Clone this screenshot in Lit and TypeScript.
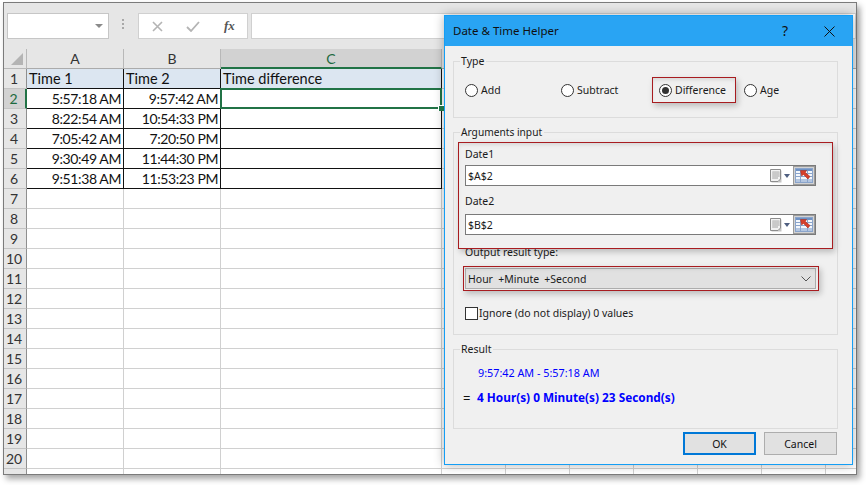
import { LitElement, html, css, svg } from "lit";
import { customElement } from "lit/decorators.js";

const COLS = ["A", "B", "C", "", "", "", "", "", "", ""];
const DATA: [string, string][] = [
  ["5:57:18 AM", "9:57:42 AM"],
  ["8:22:54 AM", "10:54:33 PM"],
  ["7:05:42 AM", "7:20:50 PM"],
  ["9:30:49 AM", "11:44:30 PM"],
  ["9:51:38 AM", "11:53:23 PM"],
];

const calendarIcon = svg`<svg class="cal" width="12" height="14" viewBox="0 0 12 14">
  <path d="M1.500 1.500H11.500V13.500H1.500Z" fill="#c4c4c4" stroke="none"/>
  <path d="M.5 .5H10.500V10L8 12.500H.5Z" fill="#f2f2f2" stroke="#8d8d8d"/>
  <path d="M2.500 3H9M2.500 5H9M2.500 7H9M2.500 9H8M3 2.500V10M5 2.500V10M7 2.500V10M9 2.500V8" stroke="#bcbcbc" stroke-width="1" fill="none"/>
</svg>`;

const rangeIcon = svg`<svg width="18" height="15" viewBox="0 0 18 15">
  <rect x=".5" y=".5" width="17" height="14" fill="#f4f7fb" stroke="#8aa4cb"/>
  <rect x="1" y="1" width="16" height="2" fill="#6f92c4"/>
  <rect x="1" y="11" width="16" height="3" fill="#b4c6e0"/>
  <path d="M1 5.500H17M1 8.500H17M5.500 3V14M12.500 3V14" stroke="#8aa4cb" fill="none"/>
  <path d="M5.500 2.500H11.500L10.300 4.500L15 8.500L13 11L8.500 6.500L6.500 8Z" fill="#d63f2a" stroke="#a52517" stroke-width=".5"/>
</svg>`;

@customElement("app-root")
export class AppRoot extends LitElement {
  static styles = css`
    :host {
      display: block;
      width: 866px;
      height: 485px;
      background: #fff;
      overflow: hidden;
      padding: 2px 0 0 3px;
      box-sizing: border-box;
    }
    .window {
      position: relative;
      width: 854px;
      height: 473px;
      box-sizing: border-box;
      border: 1px solid #7b7b7b;
      background: #e6e6e6;
      box-shadow: 3px 4px 6px rgba(0, 0, 0, 0.35);
      display: flex;
      flex-direction: column;
      overflow: visible;
      font-family: "Lato", "Liberation Sans", sans-serif;
    }
    .toolbar {
      height: 46px;
      flex: none;
      box-sizing: border-box;
      padding: 10px 0 0 3px;
      display: flex;
      align-items: flex-start;
    }
    .namebox {
      width: 102px;
      height: 26px;
      box-sizing: border-box;
      background: #fff;
      border: 1px solid #c6c6c6;
      display: flex;
      align-items: center;
      justify-content: flex-end;
      padding-right: 4px;
    }
    .caret {
      width: 0;
      height: 0;
      border-left: 4px solid transparent;
      border-right: 4px solid transparent;
      border-top: 4px solid #8a8a8a;
      margin-right: 1px;
    }
    .grip {
      width: 2px;
      margin: 6px 14px 0 13px;
      display: flex;
      flex-direction: column;
      gap: 2px;
    }
    .grip i {
      display: block;
      width: 2px;
      height: 2px;
      background: #a8a8a8;
    }
    .fxbox {
      width: 110px;
      height: 26px;
      box-sizing: border-box;
      background: #fff;
      border: 1px solid #d0d0d0;
      display: flex;
      align-items: center;
      margin-right: 3px;
    }
    .fxbox svg {
      display: block;
    }
    .x {
      margin-left: 13px;
    }
    .check {
      margin-left: 23px;
    }
    .fx {
      margin-left: 24px;
      font: italic 700 13px "Liberation Serif", serif;
      color: #555;
    }
    .formula {
      flex: 1;
      height: 26px;
      box-sizing: border-box;
      background: #fff;
      border: 1px solid #d0d0d0;
    }
    .sheetwrap {
      flex: 1;
      overflow: hidden;
      min-height: 0;
    }
    .sheet {
      display: grid;
      grid-template-columns: 23px 97px 97px 221px repeat(7, 64px);
      grid-auto-rows: 20px;
      background: #fff;
      font-size: 14px;
      color: #111;
    }
    .c {
      box-sizing: border-box;
      border-right: 1px solid #d0d0d0;
      border-bottom: 1px solid #d0d0d0;
      min-width: 0;
      white-space: nowrap;
      line-height: 19px;
      padding: 0 2px;
    }
    .corner {
      background: #e6e6e6;
      border-right: 1px solid #b8b8b8;
      border-bottom: 1px solid #b8b8b8;
      display: flex;
      align-items: flex-end;
      justify-content: flex-end;
      padding: 0 3px 3px 0;
    }
    .corner i {
      display: block;
      width: 12px;
      height: 12px;
      background: #b4b4b4;
      clip-path: polygon(100% 0, 100% 100%, 0 100%);
    }
    .ch {
      background: #e6e6e6;
      border-right: 1px solid #b8b8b8;
      border-bottom: 1px solid #ababab;
      text-align: center;
      color: #333;
    }
    .ch.sel {
      background: #d2d2d2;
      color: #1d6a3f;
      border-bottom: 2px solid #217346;
    }
    .rh {
      background: #e6e6e6;
      border-right: 1px solid #8f8f8f;
      border-bottom: 1px solid #c4c4c4;
      text-align: center;
      color: #333;
      padding: 0 2px 0 0;
    }
    .rh.sel {
      background: #d2d2d2;
      color: #1d6a3f;
      border-right: 2px solid #217346;
    }
    .b {
      border-right-color: #111;
      border-bottom-color: #111;
    }
    .head {
      background: #dce6f1;
      font-size: 14.500px;
    }
    .num {
      text-align: right;
      font-size: 14px;
      letter-spacing: -0.4px;
      padding-right: 2px;
    }
    .active {
      position: relative;
    }
    .active::after {
      content: "";
      position: absolute;
      left: -1px;
      top: -1px;
      right: -1px;
      bottom: -1px;
      border: 2px solid #217346;
    }
    .handle {
      position: absolute;
      right: -3px;
      bottom: -3px;
      width: 5px;
      height: 5px;
      background: #217346;
      border: 1px solid #fff;
      border-right: none;
      border-bottom: none;
      z-index: 1;
    }

    .dialog {
      position: absolute;
      left: 440px;
      top: 12px;
      width: 409px;
      height: 450px;
      box-sizing: border-box;
      border: 1px solid #149ef5;
      background: #f0f0f0;
      box-shadow: 0 0 10px rgba(0, 0, 0, 0.3);
      font-family: "Noto Sans", "Liberation Sans", sans-serif;
      font-size: 10.500px;
      line-height: 14px;
      color: #1a1a1a;
      display: flex;
      flex-direction: column;
    }
    .title {
      height: 30px;
      flex: none;
      background: #29a4f3;
      display: flex;
      align-items: center;
      padding: 0 17px 0 8px;
      font-size: 11.500px;
      color: #101010;
    }
    .title span:first-child {
      flex: 1;
    }
    .help {
      font-size: 14px;
      margin-right: 36px;
    }
    .close {
      display: block;
    }
    .body {
      flex: 1;
      padding: 8px 14px 0 8px;
      display: flex;
      flex-direction: column;
      gap: 7px;
    }
    fieldset {
      margin: 0;
      width: 385px;
      box-sizing: border-box;
      border: 1px solid #dcdcdc;
      padding: 0 11px;
      min-width: 0;
      flex: none;
    }
    legend {
      margin-left: -5px;
      padding: 0 2px 0 1px;
      line-height: 14px;
    }
    .type {
      height: 64px;
    }
    .args {
      height: 210px;
    }
    .args legend {
      font-size: 10.200px;
    }
    .result {
      height: 87px;
      padding-left: 9px;
    }
    .result legend {
      margin-left: -3px;
    }
    .radios {
      display: grid;
      grid-template-columns: 96px 98px 85px auto;
      padding-top: 15px;
    }
    .opt {
      display: flex;
      align-items: center;
      gap: 3px;
    }
    .radio {
      width: 13px;
      height: 13px;
      box-sizing: border-box;
      border: 1px solid #333;
      border-radius: 50%;
      background: #fff;
      display: flex;
      align-items: center;
      justify-content: center;
    }
    .radio i {
      display: block;
      width: 7px;
      height: 7px;
      border-radius: 50%;
      background: #333;
    }
    .label {
      padding-top: 8px;
      margin-bottom: 4px;
    }
    .label.second {
      padding-top: 8px;
      margin-bottom: 6px;
    }
    .input {
      width: 351px;
      height: 21px;
      box-sizing: border-box;
      background: #fff;
      border: 1px solid #7a7a7a;
      display: flex;
      align-items: center;
      padding: 0;
    }
    .input .val {
      flex: 1;
      padding-left: 2px;
    }
    .cal {
      display: block;
      flex: none;
      margin-right: 2px;
    }
    .tri {
      flex: none;
      width: 0;
      height: 0;
      border-left: 3.500px solid transparent;
      border-right: 3.500px solid transparent;
      border-top: 4px solid #4f5f80;
      margin-right: 3px;
    }
    .range {
      flex: none;
      width: 22px;
      height: 19px;
      box-sizing: border-box;
      background: #d2d2d2;
      border: 1px solid #9a9a9a;
      display: flex;
      align-items: center;
      justify-content: center;
    }
    .range svg {
      display: block;
    }
    .outlabel {
      padding-top: 10px;
      margin-bottom: 9px;
    }
    .combo {
      width: 351px;
      height: 21px;
      box-sizing: border-box;
      background: #e1e1e1;
      border: 1px solid #adadad;
      display: flex;
      align-items: center;
      justify-content: space-between;
      padding: 0 4px 0 2px;
      word-spacing: 2.500px;
    }
    .combo svg {
      display: block;
    }
    .ignore {
      display: flex;
      align-items: center;
      gap: 1px;
      margin-top: 17px;
    }
    .box {
      width: 13px;
      height: 13px;
      box-sizing: border-box;
      border: 1px solid #333;
      background: #fff;
    }
    .r1 {
      color: #0000ff;
      padding: 10px 0 0 15px;
      font-size: 10.800px;
    }
    .r2 {
      display: flex;
      padding-top: 10px;
      color: #0000ff;
      font-weight: 700;
    }
    .eq {
      color: #111;
      width: 14px;
      margin-top: 1px;
      font-size: 13px;
      font-weight: 400;
    }
    .r2 span:last-child {
      font-size: 11.800px;
    }
    .buttons {
      display: flex;
      justify-content: flex-end;
      gap: 8px;
      margin: -4px 1px 0 0;
    }
    button {
      width: 73px;
      height: 23px;
      box-sizing: border-box;
      background: #e1e1e1;
      border: 1px solid #adadad;
      padding: 0;
      font: inherit;
      color: #111;
    }
    button.primary {
      border: 2px solid #0078d7;
    }
    .mark {
      position: absolute;
      box-sizing: border-box;
      border: 1px solid #a81c20;
      box-shadow: 2px 3px 6px rgba(0, 0, 0, 0.22), inset 0 3px 5px -2px rgba(0, 0, 0, 0.14);
      pointer-events: none;
    }
    .m1 {
      left: 207px;
      top: 61px;
      width: 84px;
      height: 26px;
    }
    .m2 {
      left: 13px;
      top: 126px;
      width: 375px;
      height: 107px;
    }
    .m3 {
      left: 18px;
      top: 250px;
      width: 356px;
      height: 25px;
    }
  `;

  private rowHeader(n: number) {
    return html`<div class="c rh ${n === 2 ? "sel" : ""}">${n}</div>`;
  }

  private rows() {
    const out = [];
    for (let n = 1; n <= 21; n++) {
      out.push(this.rowHeader(n > 20 ? ("" as any) : n));
      if (n === 1) {
        out.push(html`<div class="c b head">Time 1</div><div class="c b head">Time 2</div><div class="c b head">Time difference</div>`);
      } else if (n <= 6) {
        const d = DATA[n - 2];
        out.push(html`<div class="c b num">${d[0]}</div><div class="c b num">${d[1]}</div>`);
        out.push(n === 2
          ? html`<div class="c b active"><span class="handle"></span></div>`
          : html`<div class="c b"></div>`);
      } else {
        out.push(html`<div class="c"></div><div class="c"></div><div class="c"></div>`);
      }
      for (let i = 0; i < 7; i++) out.push(html`<div class="c"></div>`);
    }
    return out;
  }

  private pickerInput(value: string) {
    return html`<div class="input">
      <span class="val">${value}</span>
      ${calendarIcon}
      <span class="tri"></span>
      <span class="range">${rangeIcon}</span>
    </div>`;
  }

  private radio(label: string, on = false) {
    return html`<div class="opt"><span class="radio">${on ? html`<i></i>` : ""}</span>${label}</div>`;
  }

  render() {
    return html`
      <div class="window">
        <div class="toolbar">
          <div class="namebox"><span class="caret"></span></div>
          <div class="grip"><i></i><i></i><i></i></div>
          <div class="fxbox">
            <svg class="x" width="11" height="11" viewBox="0 0 11 11"><path d="M1 1L10 10M10 1L1 10" stroke="#b4b4b4" stroke-width="1.600" fill="none"/></svg>
            <svg class="check" width="14" height="11" viewBox="0 0 14 11"><path d="M1 6L5 10L13 1" stroke="#b4b4b4" stroke-width="1.800" fill="none"/></svg>
            <span class="fx">fx</span>
          </div>
          <div class="formula"></div>
        </div>
        <div class="sheetwrap">
          <div class="sheet">
            <div class="c corner"><i></i></div>
            ${COLS.map((c, i) => html`<div class="c ch ${i === 2 ? "sel" : ""}">${c}</div>`)}
            ${this.rows()}
          </div>
        </div>

        <div class="dialog">
          <div class="title">
            <span>Date &amp; Time Helper</span>
            <span class="help">?</span>
            <svg class="close" width="11" height="11" viewBox="0 0 11 11"><path d="M.5 .5L10.500 10.500M10.500 .5L.5 10.500" stroke="#111" stroke-width="1" fill="none"/></svg>
          </div>
          <div class="body">
            <fieldset class="type">
              <legend>Type</legend>
              <div class="radios">
                ${this.radio("Add")}
                ${this.radio("Subtract")}
                ${this.radio("Difference", true)}
                ${this.radio("Age")}
              </div>
            </fieldset>
            <fieldset class="args">
              <legend>Arguments input</legend>
              <div class="label">Date1</div>
              ${this.pickerInput("$A$2")}
              <div class="label second">Date2</div>
              ${this.pickerInput("$B$2")}
              <div class="outlabel">Output result type:</div>
              <div class="combo">
                <span>Hour +Minute +Second</span>
                <svg width="10" height="6" viewBox="0 0 10 6"><path d="M.5 .5L5 5L9.500 .5" stroke="#555" fill="none"/></svg>
              </div>
              <div class="ignore"><span class="box"></span>Ignore (do not display) 0 values</div>
            </fieldset>
            <fieldset class="result">
              <legend>Result</legend>
              <div class="r1">9:57:42 AM - 5:57:18 AM</div>
              <div class="r2"><span class="eq">=</span><span>4 Hour(s) 0 Minute(s) 23 Second(s)</span></div>
            </fieldset>
            <div class="buttons">
              <button class="primary">OK</button>
              <button>Cancel</button>
            </div>
          </div>
          <div class="mark m1"></div>
          <div class="mark m2"></div>
          <div class="mark m3"></div>
        </div>
      </div>
    `;
  }
}
